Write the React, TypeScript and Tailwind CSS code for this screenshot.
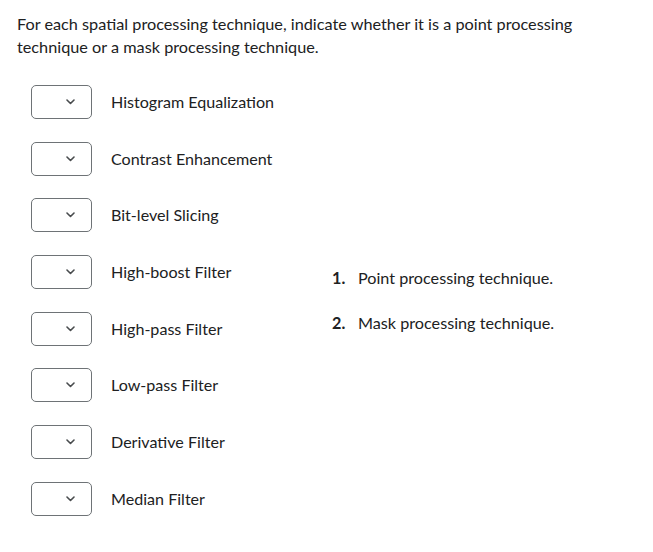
const items = [
  'Histogram Equalization',
  'Contrast Enhancement',
  'Bit-level Slicing',
  'High-boost Filter',
  'High-pass Filter',
  'Low-pass Filter',
  'Derivative Filter',
  'Median Filter',
];

const choices = ['Point processing technique.', 'Mask processing technique.'];

function Chevron() {
  return (
    <svg width="9" height="6" viewBox="0 0 9 6" className="text-[#494c4e]">
      <path d="M1 1l3.5 3.5L8 1" fill="none" stroke="currentColor" strokeWidth="1.6" strokeLinecap="round" strokeLinejoin="round" />
    </svg>
  );
}

export default function App() {
  return (
    <div className="min-h-screen bg-white text-[#202122]" style={{ fontFamily: 'Lato, "Noto Sans", sans-serif' }}>
      <div className="px-[17px] pt-[12px]">
        <p className="text-[16.25px] leading-[23px]">
          For each spatial processing technique, indicate whether it is a point processing
          <br />
          technique or a mask processing technique.
        </p>
        <div className="mt-[27px] flex">
          <div className="ml-[14px] flex w-[301px] flex-col gap-[22.7px]">
            {items.map((label) => (
              <div key={label} className="flex h-[34px] items-center">
                <div className="flex h-[34px] w-[61px] items-center justify-end rounded-[5px] border border-[#6e7376] pr-[16px]">
                  <Chevron />
                </div>
                <span className="ml-[19px] text-[16.1px]">{label}</span>
              </div>
            ))}
          </div>
          <ol className="pt-[181px] flex flex-col gap-[22px]">
            {choices.map((c, i) => (
              <li key={c} className="flex text-[16.2px] leading-[23px]">
                <span className="w-[26px] font-bold">{i + 1}.</span>
                <span>{c}</span>
              </li>
            ))}
          </ol>
        </div>
      </div>
    </div>
  );
}
